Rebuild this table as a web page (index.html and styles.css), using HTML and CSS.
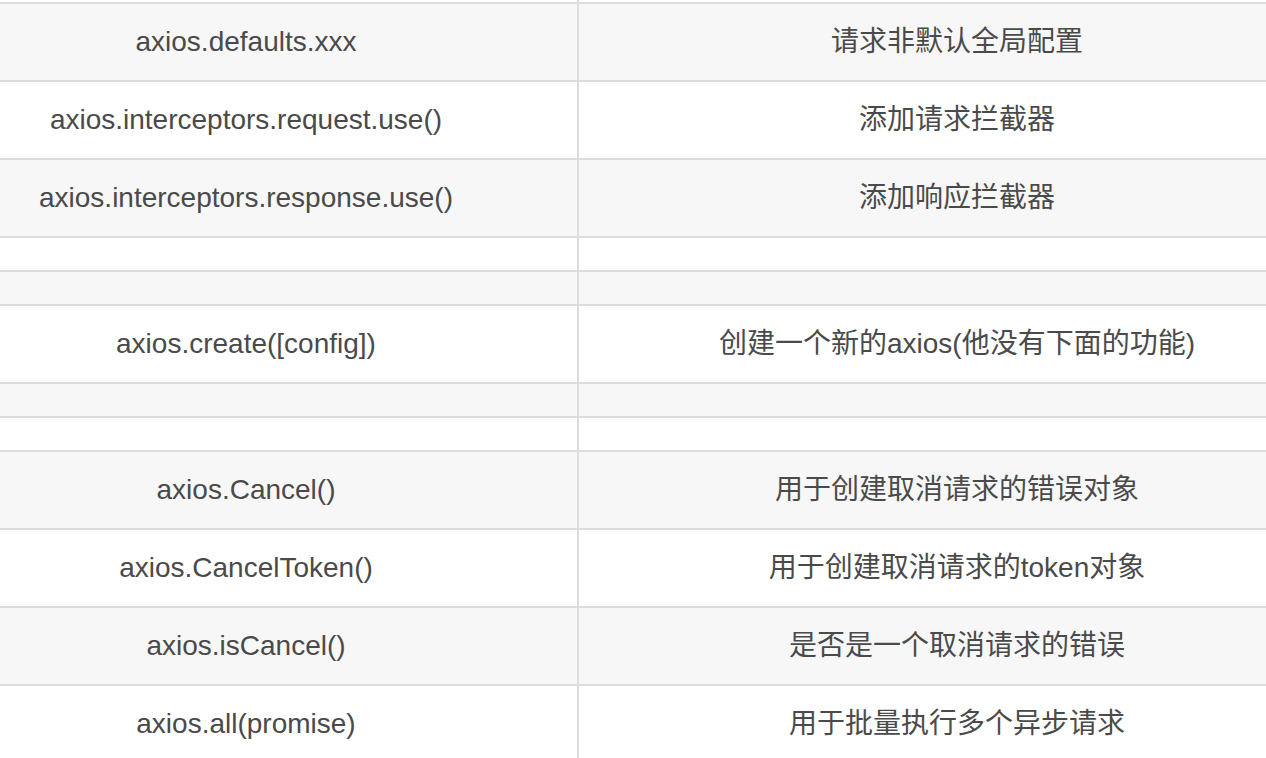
FILE: index.html
```html
<!DOCTYPE html>
<html lang="zh-CN">
<head>
<meta charset="utf-8">
<title>axios API</title>
<link rel="stylesheet" href="styles.css">
</head>
<body>
<div class="frame">
  <table class="api-table">
    <colgroup><col class="col-name"><col class="col-desc"></colgroup>
    <tbody>
      <tr class="row-cut"><td></td><td></td></tr>
      <tr class="alt"><td>axios.defaults.xxx</td><td>请求非默认全局配置</td></tr>
      <tr><td>axios.interceptors.request.use()</td><td>添加请求拦截器</td></tr>
      <tr class="alt"><td>axios.interceptors.response.use()</td><td>添加响应拦截器</td></tr>
      <tr class="row-empty"><td></td><td></td></tr>
      <tr class="row-empty alt"><td></td><td></td></tr>
      <tr><td>axios.create([config])</td><td>创建一个新的axios(他没有下面的功能)</td></tr>
      <tr class="row-empty alt"><td></td><td></td></tr>
      <tr class="row-empty"><td></td><td></td></tr>
      <tr class="alt"><td>axios.Cancel()</td><td>用于创建取消请求的错误对象</td></tr>
      <tr><td>axios.CancelToken()</td><td>用于创建取消请求的token对象</td></tr>
      <tr class="alt"><td>axios.isCancel()</td><td>是否是一个取消请求的错误</td></tr>
      <tr><td>axios.all(promise)</td><td>用于批量执行多个异步请求</td></tr>
    </tbody>
  </table>
</div>
</body>
</html>
```
FILE: styles.css
```css
html, body {
  margin: 0;
  padding: 0;
  background: #ffffff;
}

.frame {
  width: 1266px;
  height: 758px;
  overflow: hidden;
}

.api-table {
  margin-left: -85px;
  border-collapse: separate;
  border-spacing: 0;
  table-layout: fixed;
  width: 1420px;
  font-family: "Liberation Sans", Arial, "Noto Sans CJK SC", sans-serif;
  font-size: 28px;
  color: #4a4a4a;
}

.col-name { width: 664px; }
.col-desc { width: 756px; }

.api-table td {
  height: 76px;
  padding: 0;
  text-align: center;
  vertical-align: middle;
  border-bottom: 2px solid #dddddd;
  white-space: nowrap;
  line-height: 1.2;
}

.api-table td:first-child {
  border-right: 2px solid #dddddd;
}

.api-table tr.alt td {
  background: #f7f7f7;
}

.api-table tr.row-empty td {
  height: 32px;
}

.api-table tr.row-cut td {
  height: 2px;
}
```
